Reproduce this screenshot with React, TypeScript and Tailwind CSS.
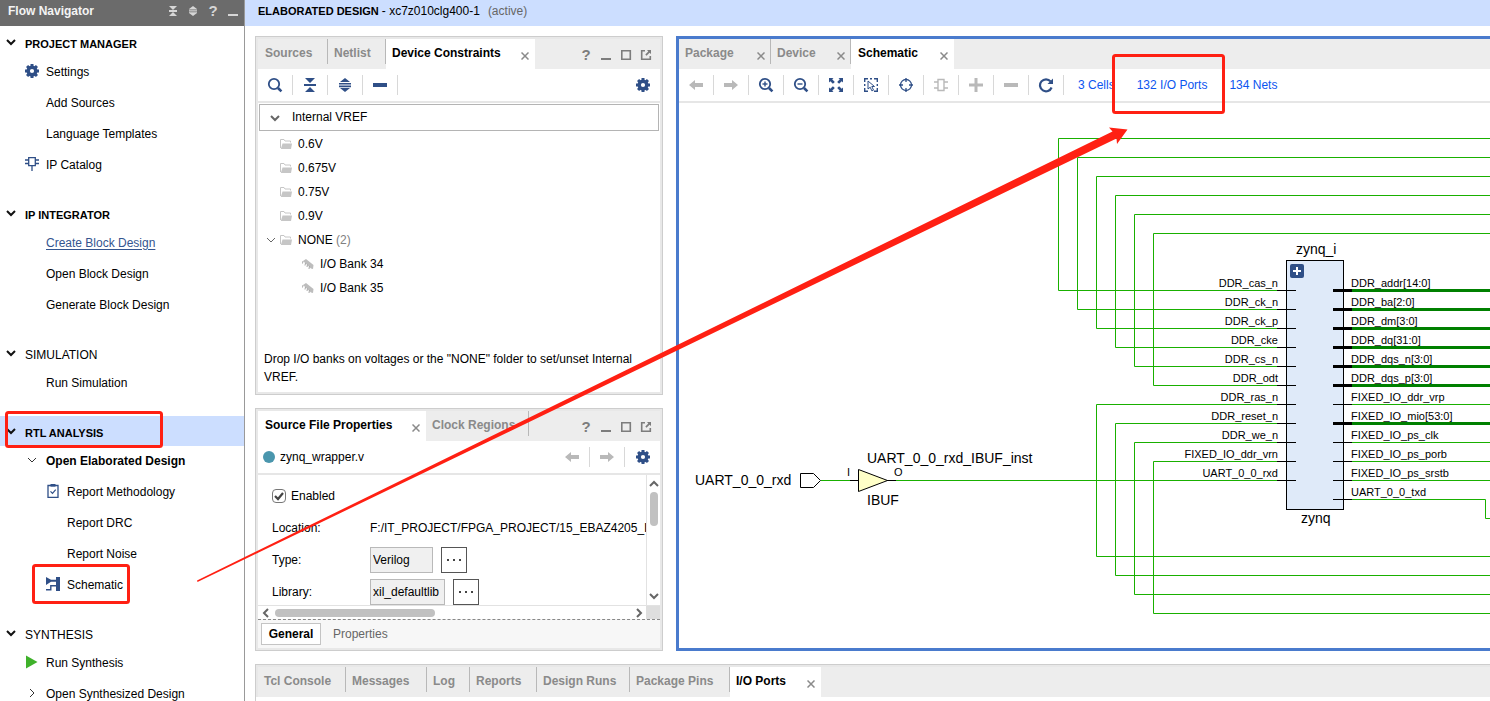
import React, { useState } from "react";

const NAVY = "#2f4f87";
const WIRE = "#19b000";
const BUS = "#008000";

type IconProps = { color?: string };

function Svg({ size = 16, children }: { size?: number; children: React.ReactNode }) {
  return (
    <svg width={size} height={size} viewBox="0 0 16 16" fill="none" aria-hidden="true" className="shrink-0">
      {children}
    </svg>
  );
}

function GearIcon({ color = NAVY }: IconProps) {
  return (
    <Svg>
      <circle cx="8" cy="8" r="3.8" stroke={color} strokeWidth="3.4" />
      {[0, 45, 90, 135, 180, 225, 270, 315].map((a) => (
        <rect key={a} x="6.5" y="1" width="3" height="3" fill={color} transform={`rotate(${a} 8 8)`} />
      ))}
    </Svg>
  );
}

function CollapseIcon({ color = NAVY }: IconProps) {
  return (
    <Svg>
      <path d="M3 1h10L8 6zM2 7h12v2H2zM8 10l5 5H3z" fill={color} />
    </Svg>
  );
}

function ExpandIcon({ color = NAVY }: IconProps) {
  return (
    <Svg>
      <path d="M8 1l5 4H3zM2 6h12v1.6H2zM2 8.6h12v1.6H2zM3 11h10l-5 4z" fill={color} />
    </Svg>
  );
}

function MinusIcon({ color = NAVY }: IconProps) {
  return (
    <Svg>
      <path d="M1 6h14v4H1z" fill={color} />
    </Svg>
  );
}

function PlusIcon({ color = NAVY }: IconProps) {
  return (
    <Svg>
      <path d="M6.5 1h3v5.5H15v3H9.5V15h-3V9.5H1v-3h5.5z" fill={color} />
    </Svg>
  );
}

function SearchIcon({ sign }: { sign?: "+" | "-" }) {
  return (
    <Svg>
      <circle cx="7" cy="7" r="5.2" stroke={NAVY} strokeWidth="1.8" />
      <path d="M11 11l3.4 3.4" stroke={NAVY} strokeWidth="2.6" />
      {sign && <path d="M4.5 7h5" stroke={NAVY} strokeWidth="1.4" />}
      {sign === "+" && <path d="M7 4.5v5" stroke={NAVY} strokeWidth="1.4" />}
    </Svg>
  );
}

function ArrowIcon({ flip }: { flip?: boolean }) {
  return (
    <Svg>
      <path
        d="M1 8l6-5v3h8v4H7v3z"
        fill="#b9b9b9"
        transform={flip ? "rotate(180 8 8)" : undefined}
      />
    </Svg>
  );
}

function FitIcon() {
  return (
    <Svg>
      <path
        d="M1 1h4.500L4.200 2.300 6.800 4.900 4.900 6.800 2.300 4.200 1 5.500zM15 1v4.500l-1.300-1.300-2.600 2.600-1.900-1.900 2.600-2.600L10.500 1zM1 15v-4.500l1.300 1.300 2.600-2.600 1.900 1.900-2.600 2.600L5.500 15zM15 15h-4.500l1.300-1.300-2.600-2.600 1.900-1.900 2.600 2.600 1.300-1.300z"
        fill={NAVY}
      />
    </Svg>
  );
}

function SelectAreaIcon() {
  return (
    <Svg>
      <path d="M1.700 5V1.700H5M7 1.700h2M11 1.700h3.300V5M14.300 7v2M14.300 11v3.300H11M5 14.300H1.700V11M1.700 7v2" stroke={NAVY} strokeWidth="1.400" />
      <path d="M5 4l6.500 5.500H8.800l1.700 3.600-1.600.8-1.700-3.700L5 12z" stroke={NAVY} strokeWidth="1" fill="#fff" />
    </Svg>
  );
}

function TargetIcon() {
  return (
    <Svg>
      <circle cx="8" cy="8" r="5.5" stroke={NAVY} strokeWidth="1.3" />
      <path d="M8 1v4M8 11v4M1 8h4M11 8h4" stroke={NAVY} strokeWidth="1.3" />
    </Svg>
  );
}

function CellIcon() {
  return (
    <Svg>
      <path d="M5 2.5h6v11H5zM1 5h4M1 11h4M11 5h4M11 11h4" stroke="#b9b9b9" strokeWidth="1.4" />
    </Svg>
  );
}

function RefreshIcon() {
  return (
    <Svg>
      <path d="M12.600 4.400A6 6 0 1 0 13.600 10.500" stroke={NAVY} strokeWidth="2.200" />
      <path d="M15 1.500V7H9.500z" fill={NAVY} />
    </Svg>
  );
}

function IpIcon() {
  return (
    <Svg>
      <path d="M4.700 1.700h6.600v8H4.700zM1 4h3.700M1 7.500h3.700M11.300 4H15M11.300 7.500H15M8 9.700V15" stroke={NAVY} strokeWidth="1.300" />
    </Svg>
  );
}

function ClipboardIcon() {
  return (
    <Svg>
      <path d="M3 2.500h10v11.800H3z" stroke={NAVY} strokeWidth="1.300" />
      <path d="M5.500 1h5v2.600h-5z" fill={NAVY} />
      <path d="M5.500 8.300l2 2 3.200-3.600" stroke={NAVY} strokeWidth="1.200" />
    </Svg>
  );
}

function SchematicIcon() {
  return (
    <Svg>
      <path d="M1 1l5 2.800h5V1h4v14h-4V5.800H6L1 9z" fill={NAVY} />
      <path d="M1 13.800h4.800V9.800H11" stroke={NAVY} strokeWidth="1.400" />
    </Svg>
  );
}

function PlayIcon() {
  return (
    <Svg>
      <path d="M2 1.500l11.500 6.500L2 14.500z" fill="#3fb12a" />
    </Svg>
  );
}

function FolderIcon() {
  return (
    <svg width="12" height="12" viewBox="0 0 12 12" aria-hidden="true" className="shrink-0">
      <path d="M.5 10V1.500H4l1 1.500h5.500v1.500" fill="none" stroke="#c6c6c6" />
      <path d="M2.500 5.500H12L11 11H.8z" fill="#c6c6c6" />
    </svg>
  );
}

function BankIcon() {
  return (
    <svg width="12" height="12" viewBox="0 0 12 12" aria-hidden="true" className="shrink-0">
      <path d="M1 3l3-2 7.500 6-.5 4-2-.5z" fill="#bdbdbd" />
      <path d="M1 3l-.5 2.500M3.500 5L3 7.500M5.500 6.500L5 9M7.500 8L7 11" stroke="#a8a8a8" />
    </svg>
  );
}

function Chevron({ dir = "down", color = "#111", width = 2 }: { dir?: string; color?: string; width?: number }) {
  const turn = dir === "right" ? -90 : dir === "left" ? 90 : dir === "up" ? 180 : 0;
  return (
    <svg width="10" height="10" viewBox="0 0 10 10" aria-hidden="true" className="shrink-0">
      <path d="M1 3l4 4 4-4" fill="none" stroke={color} strokeWidth={width} transform={`rotate(${turn} 5 5)`} />
    </svg>
  );
}

function CloseIcon() {
  return (
    <svg width="8" height="8" viewBox="0 0 8 8" aria-hidden="true" className="mt-1 shrink-0">
      <path d="M.5.5l7 7M7.500.5l-7 7" stroke="#8a8a8a" strokeWidth="1.500" />
    </svg>
  );
}

function WindowControls() {
  return (
    <div className="mr-2 ml-auto flex items-center gap-2 pt-0.5 text-[#7d7d7d]">
      <button type="button" aria-label="Help" className="w-3 text-center text-[15px] leading-4 font-bold">
        ?
      </button>
      <button type="button" aria-label="Minimize">
        <svg width="12" height="12" viewBox="0 0 12 12">
          <path d="M1 10h10" stroke="currentColor" strokeWidth="2" />
        </svg>
      </button>
      <button type="button" aria-label="Maximize">
        <svg width="12" height="12" viewBox="0 0 12 12">
          <path d="M1.800 1.800h8.500v8.500H1.800z" fill="none" stroke="currentColor" strokeWidth="1.600" />
        </svg>
      </button>
      <button type="button" aria-label="Float">
        <svg width="12" height="12" viewBox="0 0 12 12">
          <path d="M5 1.700H1.700v8.600h8.600V7" fill="none" stroke="currentColor" strokeWidth="1.600" />
          <path d="M7 1h4v4L9.500 3.800 6.500 6.800 5.300 5.500 8.300 2.500z" fill="currentColor" />
        </svg>
      </button>
    </div>
  );
}

function Tab({
  label,
  className,
  active,
  closable,
  divider,
}: {
  label: string;
  className: string;
  active?: boolean;
  closable?: boolean;
  divider?: boolean;
}) {
  return (
    <button
      type="button"
      className={`flex shrink-0 items-center justify-between font-bold whitespace-nowrap ${
        active ? "bg-white text-black" : "text-[#8a8a8a]"
      } ${className}`}
    >
      <span className="pb-[3px]">{label}</span>
      <span className="flex h-full items-center">
        {closable && <CloseIcon />}
        {divider && <span className="ml-[5px] h-[25px] w-px self-start bg-[#b8b8b8]" />}
      </span>
    </button>
  );
}

function Panel({ className, children }: { className: string; children: React.ReactNode }) {
  return (
    <section className={`flex flex-col border border-[#cdcdcd] ${className}`}>
      <div className="flex min-h-0 flex-1 flex-col border-2 border-[#e8e8e8]">{children}</div>
    </section>
  );
}

function Tool({ label, last, children }: { label: string; last?: boolean; children: React.ReactNode }) {
  return (
    <button
      type="button"
      aria-label={label}
      className={`flex h-5 w-[35px] shrink-0 items-center justify-center ${last ? "" : "border-r border-[#d8d8d8]"}`}
    >
      {children}
    </button>
  );
}

type NavItem = { label: string; icon?: React.ReactNode; nested?: boolean; link?: boolean; bold?: boolean };
type NavSection = { title: string; bold?: boolean; selected?: boolean; items: NavItem[] };

const sections: NavSection[] = [
  {
    title: "PROJECT MANAGER",
    bold: true,
    items: [
      { label: "Settings", icon: <GearIcon /> },
      { label: "Add Sources" },
      { label: "Language Templates" },
      { label: "IP Catalog", icon: <IpIcon /> },
    ],
  },
  {
    title: "IP INTEGRATOR",
    bold: true,
    items: [
      { label: "Create Block Design", link: true },
      { label: "Open Block Design" },
      { label: "Generate Block Design" },
    ],
  },
  { title: "SIMULATION", items: [{ label: "Run Simulation" }] },
  {
    title: "RTL ANALYSIS",
    bold: true,
    selected: true,
    items: [
      { label: "Open Elaborated Design", bold: true, icon: <Chevron color="#333" width={1} /> },
      { label: "Report Methodology", nested: true, icon: <ClipboardIcon /> },
      { label: "Report DRC", nested: true },
      { label: "Report Noise", nested: true },
      { label: "Schematic", nested: true, icon: <SchematicIcon /> },
    ],
  },
  {
    title: "SYNTHESIS",
    items: [
      { label: "Run Synthesis", icon: <PlayIcon /> },
      { label: "Open Synthesized Design", icon: <Chevron dir="right" color="#333" width={1} /> },
    ],
  },
];

function NavRow({ item }: { item: NavItem }) {
  const cls = `flex h-[31px] w-full items-center gap-1.5 pb-0.5 whitespace-nowrap ${
    item.nested ? "pl-[45px]" : "pl-6"
  } ${item.bold ? "font-bold" : ""}`;
  const icon = <span className="flex w-4 shrink-0 items-center justify-center pb-0.5">{item.icon}</span>;
  if (item.link) {
    return (
      <a href="#create-block-design" className={`${cls} text-[#34558f]`}>
        {icon}
        <span className="underline underline-offset-2">{item.label}</span>
      </a>
    );
  }
  return (
    <button type="button" className={cls}>
      {icon}
      {item.label}
    </button>
  );
}

function FlowNavigator() {
  return (
    <aside className="flex w-[245px] shrink-0 flex-col overflow-hidden border-r border-[#999]">
      <header className="flex h-[26px] shrink-0 items-center bg-[#6b6b6b] pb-1 pl-2 font-bold text-[#f4f4f4]">
        Flow Navigator
        <div className="mr-[5px] ml-auto flex items-center gap-2">
          <button type="button" aria-label="Collapse all" className="flex w-3 justify-center">
            <svg width="10" height="12" viewBox="0 0 10 12">
              <path d="M1 1h8L5 5zM1 5h8v2H1zM5 7l4 4H1z" fill="#d6d6d6" />
            </svg>
          </button>
          <button type="button" aria-label="Expand all" className="flex w-3 justify-center">
            <svg width="10" height="12" viewBox="0 0 10 12">
              <path d="M5 1l4 3H1zM1 4.500h8v1.200H1zM1 6.500h8v1.200H1zM1 8h8l-4 3z" fill="#d6d6d6" />
            </svg>
          </button>
          <button type="button" aria-label="Help" className="w-3 text-center text-[15px] leading-4 text-[#d6d6d6]">
            ?
          </button>
          <button type="button" aria-label="Minimize" className="flex w-3 justify-center">
            <svg width="10" height="12" viewBox="0 0 10 12">
              <path d="M0 10h10" stroke="#d6d6d6" strokeWidth="2" />
            </svg>
          </button>
        </div>
      </header>
      <nav className="flex flex-col gap-[17px] pt-px">
        {sections.map((s) => (
          <div key={s.title}>
            <button
              type="button"
              className={`flex h-[30px] w-full items-center gap-[9px] pl-1.5 ${s.selected ? "bg-[#ccdeff]" : ""}`}
            >
              <Chevron />
              <span className={`pt-[3px] ${s.bold ? "text-[11px] font-bold" : ""}`}>{s.title}</span>
            </button>
            {s.items.map((item) => (
              <NavRow key={item.label} item={item} />
            ))}
          </div>
        ))}
      </nav>
    </aside>
  );
}

function DeviceConstraints() {
  return (
    <Panel className="min-h-0 flex-1">
      <div className="flex h-[30px] shrink-0 bg-[#ededed]">
        <Tab label="Sources" className="w-[70px] pl-[7px]" divider />
        <Tab label="Netlist" className="w-[58px] pl-1.5" divider />
        <Tab label="Device Constraints" className="w-[149px] pr-1.5 pl-1.5" active closable />
        <WindowControls />
      </div>
      <div className="flex h-[34px] shrink-0 items-center border-b-2 border-[#e6e6e6]">
        <Tool label="Search"><SearchIcon /></Tool>
        <Tool label="Collapse all"><CollapseIcon /></Tool>
        <Tool label="Expand all"><ExpandIcon /></Tool>
        <Tool label="Remove"><MinusIcon /></Tool>
        <button type="button" aria-label="Settings" className="mr-[9px] ml-auto">
          <GearIcon />
        </button>
      </div>
      <div className="mx-px mt-px flex h-[27px] shrink-0 items-center gap-3 border border-[#b4b4b4] pl-2.5">
        <Chevron color="#666" />
        <span className="pb-0.5">Internal VREF</span>
      </div>
      <ul className="mt-px">
        {["0.6V", "0.675V", "0.75V", "0.9V"].map((v) => (
          <li key={v} className="flex h-6 items-center gap-1.5 pl-[22px]">
            <FolderIcon />
            {v}
          </li>
        ))}
        <li className="flex h-6 items-center pl-2">
          <Chevron color="#666" width={1} />
          <span className="ml-1 flex items-center gap-1.5">
            <FolderIcon />
            <span>
              NONE <span className="text-[#808080]">(2)</span>
            </span>
          </span>
        </li>
        {["I/O Bank 34", "I/O Bank 35"].map((v) => (
          <li key={v} className="flex h-6 items-center gap-1.5 pl-11">
            <BankIcon />
            {v}
          </li>
        ))}
      </ul>
      <p className="mt-auto px-1.5 pb-1.5 leading-[18px]">
        Drop I/O banks on voltages or the "NONE" folder to set/unset Internal VREF.
      </p>
    </Panel>
  );
}

function MoreButton({ label }: { label: string }) {
  return (
    <button
      type="button"
      aria-label={label}
      className="ml-2 flex h-[26px] w-[26px] shrink-0 items-center justify-center border border-[#555] bg-white"
    >
      <svg width="14" height="2" viewBox="0 0 14 2">
        <path d="M0 0h2v2H0zM6 0h2v2H6zM12 0h2v2h-2z" fill="#444" />
      </svg>
    </button>
  );
}

function SourceFileProperties() {
  const [enabled, setEnabled] = useState(true);

  return (
    <Panel className="h-[243px] shrink-0">
      <div className="flex h-[30px] shrink-0 bg-[#ededed]">
        <Tab label="Source File Properties" className="w-[168px] pr-1.5 pl-[7px]" active closable />
        <Tab label="Clock Regions" className="w-[103px] pl-1.5" divider />
        <WindowControls />
      </div>
      <div className="flex h-[34px] shrink-0 items-center border-b-2 border-[#e6e6e6] pl-[5px]">
        <span className="mr-[5px] h-3 w-3 rounded-full bg-[#4a96ad]" />
        zynq_wrapper.v
        <div className="ml-auto flex">
          <Tool label="Previous"><ArrowIcon /></Tool>
          <Tool label="Next"><ArrowIcon flip /></Tool>
          <Tool label="Settings" last><GearIcon /></Tool>
        </div>
      </div>

      <div className="flex min-h-0 flex-1">
        <div className="min-w-0 flex-1 overflow-hidden pt-[5px] pl-3.5">
          <label className="flex h-8 items-center gap-[5px]">
            <span className="relative h-3.5 w-3.5">
              <input
                type="checkbox"
                checked={enabled}
                onChange={(e) => setEnabled(e.target.checked)}
                className="block h-3.5 w-3.5 appearance-none rounded-sm border border-[#777] bg-white"
              />
              {enabled && (
                <svg viewBox="0 0 14 14" className="pointer-events-none absolute inset-0 h-3.5 w-3.5">
                  <path d="M3 7l3 3 5-6" fill="none" stroke="#444" strokeWidth="2.200" />
                </svg>
              )}
            </span>
            Enabled
          </label>
          <div className="flex h-8 items-center whitespace-nowrap">
            <span className="w-[98px] shrink-0">Location:</span>
            <span>F:/IT_PROJECT/FPGA_PROJECT/15_EBAZ4205_I</span>
          </div>
          <div className="flex h-8 items-center">
            <label htmlFor="type" className="w-[98px] shrink-0">Type:</label>
            <input id="type" readOnly value="Verilog" className="h-[26px] w-[63px] border border-[#b9b9b9] bg-[#f0f0f0] px-0.5" />
            <MoreButton label="Choose type" />
          </div>
          <div className="flex h-8 items-center">
            <label htmlFor="library" className="w-[98px] shrink-0">Library:</label>
            <input id="library" readOnly value="xil_defaultlib" className="h-[26px] w-[75px] border border-[#b9b9b9] bg-[#f0f0f0] px-0.5" />
            <MoreButton label="Choose library" />
          </div>
        </div>
        <div className="flex w-3.5 shrink-0 flex-col items-center border-l border-[#e2e2e2] py-1">
          <Chevron dir="up" color="#666" />
          <span className="mt-[3px] h-[34px] w-2 rounded-full bg-[#c1c1c1]" />
          <span className="mt-auto flex">
            <Chevron color="#666" />
          </span>
        </div>
      </div>
      <div className="flex h-3.5 shrink-0 items-center border-t border-[#e2e2e2]">
        <span className="ml-[3px] flex"><Chevron dir="left" color="#666" /></span>
        <span className="ml-1 h-2 w-40 rounded-full bg-[#c1c1c1]" />
        <span className="mr-0.5 ml-auto flex"><Chevron dir="right" color="#666" /></span>
        <span className="h-full w-3.5 bg-[#dedede]" />
      </div>
      <div className="flex h-[29px] shrink-0 items-center border-t border-dashed border-[#888] bg-[#f7f7f7] pl-[3px]">
        <button type="button" className="h-[22px] w-[60px] border border-[#c4c4c4] bg-white font-bold">
          General
        </button>
        <button type="button" className="ml-3 text-[#666]">
          Properties
        </button>
      </div>
    </Panel>
  );
}

const leftPins = [
  "DDR_cas_n",
  "DDR_ck_n",
  "DDR_ck_p",
  "DDR_cke",
  "DDR_cs_n",
  "DDR_odt",
  "DDR_ras_n",
  "DDR_reset_n",
  "DDR_we_n",
  "FIXED_IO_ddr_vrn",
  "UART_0_0_rxd",
];

const rightPins = [
  "DDR_addr[14:0]",
  "DDR_ba[2:0]",
  "DDR_dm[3:0]",
  "DDR_dq[31:0]",
  "DDR_dqs_n[3:0]",
  "DDR_dqs_p[3:0]",
  "FIXED_IO_ddr_vrp",
  "FIXED_IO_mio[53:0]",
  "FIXED_IO_ps_clk",
  "FIXED_IO_ps_porb",
  "FIXED_IO_ps_srstb",
  "UART_0_0_txd",
];

const PITCH = 19;
const FAR = 4000;
const pinY = (i: number) => 187.5 + i * PITCH;

function SchematicCanvas() {
  return (
    <svg className="block h-full w-full" role="img" aria-label="Schematic of zynq_wrapper">
      <g fill="none" stroke={WIRE}>
        {/* feedback loops over the top of the cell */}
        {[0, 1, 2, 3, 4, 5].map((i) => (
          <path key={i} d={`M598 ${pinY(i)}H${379.5 + i * PITCH}V${35.5 + i * PITCH}H${FAR}`} />
        ))}
        {/* and under it */}
        {[0, 1, 2, 3].map((i) => (
          <path key={i} d={`M598 ${pinY(i + 6)}H${417.5 + i * PITCH}V${453.5 + i * PITCH}H${FAR}`} />
        ))}
        <path d="M142 377.500H171M217 377.500H598" />
      </g>

      <rect x="607.5" y="157.5" width="57" height="249" fill="#dfeaf9" stroke="#000" />
      <rect x="611" y="161" width="14" height="14" rx="2" fill={NAVY} />
      <path d="M614 168h8M618 164v8" stroke="#fff" strokeWidth="2" />

      {leftPins.map((name, i) => (
        <g key={name}>
          <path d={`M598 ${pinY(i)}H617`} stroke="#000" />
          <text x="599" y={184 + i * PITCH} textAnchor="end" fontSize="11">
            {name}
          </text>
        </g>
      ))}

      {rightPins.map((name, i) => {
        const bus = name.includes("[");
        const last = i === rightPins.length - 1;
        return (
          <g key={name} strokeWidth={bus ? 3 : 1} fill="none">
            <path d={last ? `M673 ${pinY(i)}H806.500v${PITCH}H${FAR}` : `M673 ${pinY(i)}H${FAR}`} stroke={bus ? BUS : WIRE} />
            <path d={`M654 ${pinY(i)}H673`} stroke="#000" />
            <text x="672" y={184 + i * PITCH} fontSize="11" fill="#000" stroke="none">
              {name}
            </text>
          </g>
        );
      })}

      <g stroke="#000">
        <path d="M121.500 370.500H134.500L141.500 377.500 134.500 384.500H121.500z" fill="#fff" />
        <path d="M179.500 366.500V388.500L208.500 377.500z" fill="#ffffc8" />
        <path d="M171 377.500H179M208 377.500H217" />
      </g>

      <g fontSize="14">
        <text x="617" y="151">zynq_i</text>
        <text x="622" y="420">zynq</text>
        <text x="16" y="382">UART_0_0_rxd</text>
        <text x="188" y="360">UART_0_0_rxd_IBUF_inst</text>
        <text x="188" y="402">IBUF</text>
      </g>
      <g fontSize="11">
        <text x="168" y="373">I</text>
        <text x="215" y="373">O</text>
      </g>
    </svg>
  );
}

function SchematicPanel() {
  return (
    <section className="flex min-w-0 flex-1 flex-col border-[3px] border-r-0 border-[#4a7bcd]">
      <div className="flex h-[30px] shrink-0 bg-[#ededed]">
        <Tab label="Package" className="w-[92px] pl-1.5" closable divider />
        <Tab label="Device" className="w-20 pl-1.5" closable divider />
        <Tab label="Schematic" className="w-[103px] pr-1.5 pl-[7px]" active closable />
      </div>
      <div className="flex h-[34px] shrink-0 items-center border-b-2 border-[#e6e6e6]">
        <Tool label="Back"><ArrowIcon /></Tool>
        <Tool label="Forward"><ArrowIcon flip /></Tool>
        <Tool label="Zoom in"><SearchIcon sign="+" /></Tool>
        <Tool label="Zoom out"><SearchIcon sign="-" /></Tool>
        <Tool label="Zoom fit"><FitIcon /></Tool>
        <Tool label="Select area"><SelectAreaIcon /></Tool>
        <Tool label="Center selection"><TargetIcon /></Tool>
        <Tool label="Expand cell"><CellIcon /></Tool>
        <Tool label="Add"><PlusIcon color="#b9b9b9" /></Tool>
        <Tool label="Remove"><MinusIcon color="#b9b9b9" /></Tool>
        <Tool label="Regenerate"><RefreshIcon /></Tool>
        <div className="ml-3.5 flex gap-[22px] whitespace-nowrap text-[#0b55f0]">
          <a href="#cells">3 Cells</a>
          <a href="#ports">132 I/O Ports</a>
          <a href="#nets">134 Nets</a>
        </div>
      </div>
      <div className="min-h-0 flex-1 overflow-hidden">
        <SchematicCanvas />
      </div>
    </section>
  );
}

function ResultsPanel() {
  return (
    <section className="h-[37px] shrink-0 overflow-hidden border-t border-l border-[#cdcdcd]">
      <div className="border-t-2 border-l-2 border-[#e8e8e8]">
        <div className="flex h-[30px] bg-[#ededed]">
          <Tab label="Tcl Console" className="w-[88px] pl-1.5" divider />
          <Tab label="Messages" className="w-[81px] pl-1.5" divider />
          <Tab label="Log" className="w-[43px] pl-1.5" divider />
          <Tab label="Reports" className="w-[67px] pl-1.5" divider />
          <Tab label="Design Runs" className="w-[93px] pl-1.5" divider />
          <Tab label="Package Pins" className="w-[100px] pl-1.5" divider />
          <Tab label="I/O Ports" className="w-[91px] pr-1.5 pl-1.5" active closable />
        </div>
      </div>
    </section>
  );
}

function Annotations() {
  return (
    <svg className="pointer-events-none absolute inset-0 h-full w-full" aria-hidden="true">
      <g fill="none" stroke="#ff2013" strokeWidth="3">
        <rect x="6.5" y="412.5" width="155" height="34" rx="2" />
        <rect x="33.5" y="565.5" width="95" height="37" rx="2" />
        <rect x="1113.5" y="55.5" width="110" height="57" rx="2" />
      </g>
      <path d="M197 580.500L1112.500 131.500 1109 127.500 1127.500 129.500 1117 144 1116.500 138.500 197.500 582z" fill="#ff2013" />
    </svg>
  );
}

export default function App() {
  return (
    <div className="relative flex h-screen overflow-hidden bg-white font-['Liberation_Sans',Arial,sans-serif] text-[12px] leading-4 text-black">
      <FlowNavigator />
      <main className="flex min-w-0 flex-1 flex-col">
        <header className="flex h-[26px] shrink-0 items-center bg-[#ccdeff] pb-1 pl-[13px]">
          <h1 className="text-[11px] font-bold">ELABORATED DESIGN</h1>
          <span className="ml-[3px]">- xc7z010clg400-1</span>
          <span className="ml-2 text-[#666]">(active)</span>
        </header>
        <div className="flex min-h-0 flex-1 flex-col gap-[13px] pt-2.5 pl-2.5">
          <div className="flex min-h-0 flex-1 gap-[13px]">
            <div className="flex w-[408px] shrink-0 flex-col gap-[13px]">
              <DeviceConstraints />
              <SourceFileProperties />
            </div>
            <SchematicPanel />
          </div>
          <ResultsPanel />
        </div>
      </main>
      <Annotations />
    </div>
  );
}
